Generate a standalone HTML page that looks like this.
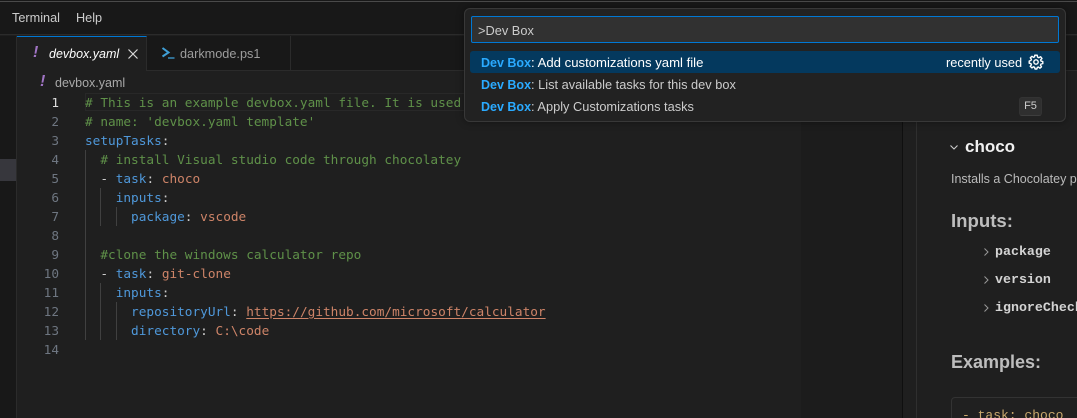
<!DOCTYPE html>
<html><head><meta charset="utf-8"><style>
*{box-sizing:border-box}
html,body{margin:0;padding:0;background:#1f1f1f}
#r{position:relative;width:1077px;height:418px;overflow:hidden;background:#1f1f1f;font-family:"Liberation Sans",sans-serif;font-size:12.5px;color:#ccc}
.a{position:absolute;white-space:pre}
.c{position:absolute;left:85px;height:19px;margin-top:1px;font:12.75px/19px "DejaVu Sans Mono",monospace;white-space:pre;color:#9cdcfe}
.n{position:absolute;left:17px;width:42px;margin-top:1px;text-align:right;font:12.75px/19px "DejaVu Sans Mono",monospace;color:#6e7681}
.g{color:#5f9149}.k{color:#4f98da}.s{color:#ce8468}.w{color:#ccc}
.ig{position:absolute;width:1px;background:#404040}
.b{color:#2aaaff;font-weight:bold;font-size:12.5px}
.row{position:absolute;left:481px;line-height:22px;height:22px;font-size:12.8px;color:#ccc;white-space:pre}
</style></head><body><div id="r">
<div class="a" style="left:0;top:0;width:1077px;height:35px;background:#181818;border-bottom:1px solid #2b2b2b"></div>
<div class="a" style="left:0;top:1px;width:1077px;height:1px;background:#4a4a4a"></div>
<div class="a" style="left:12px;top:9px;line-height:18px;font-size:12.7px;color:#ccc">Terminal</div>
<div class="a" style="left:76px;top:9px;line-height:18px;font-size:12.7px;color:#ccc">Help</div>
<div class="a" style="left:0;top:36px;width:17px;height:382px;background:#181818;border-right:1px solid #2b2b2b"></div>
<div class="a" style="left:0;top:159px;width:16px;height:22px;background:#37373d"></div>
<div class="a" style="left:17px;top:36px;width:1060px;height:35px;background:#181818;border-bottom:1px solid #2b2b2b"></div>
<div class="a" style="left:17px;top:36px;width:130px;height:35px;background:#1f1f1f;border-top:1px solid #0078d4;border-right:1px solid #2b2b2b"></div>
<div class="a" style="left:147px;top:36px;width:144px;height:35px;border-right:1px solid #2b2b2b"></div>
<div class="a" style="left:33px;top:44px;font:italic bold 16px/18px 'Liberation Sans',sans-serif;color:#a074c4">!</div>
<div class="a" style="left:49px;top:45px;line-height:18px;font-size:12.5px;font-style:italic;color:#fff">devbox.yaml</div>
<svg class="a" style="left:126px;top:47px" width="14" height="14" viewBox="0 0 14 14"><path d="M2.5 2.5L11.5 11.5M11.5 2.5L2.5 11.5" stroke="#d8d8d8" stroke-width="1.2" fill="none"/></svg>
<svg class="a" style="left:161px;top:46px" width="14" height="14" viewBox="0 0 14 14"><path d="M1.5 2L7.5 6.5L1.5 10.5" stroke="#3f9fd6" stroke-width="2" fill="none"/><path d="M7 12H13.5" stroke="#3f9fd6" stroke-width="1.3"/></svg>
<div class="a" style="left:180px;top:45px;line-height:18px;font-size:12.7px;color:#9d9d9d">darkmode.ps1</div>
<div class="a" style="left:40px;top:73px;font:italic bold 16px/18px 'Liberation Sans',sans-serif;color:#a074c4">!</div>
<div class="a" style="left:55px;top:74px;line-height:18px;font-size:12.5px;color:#a9a9a9">devbox.yaml</div>

<div class="a" style="left:85px;top:93px;width:700px;height:18px;border:1px solid #282828;border-right:0"></div>
<div class="ig" style="left:85px;top:150px;height:190px"></div>
<div class="ig" style="left:100px;top:188px;height:38px"></div>
<div class="ig" style="left:116px;top:207px;height:19px"></div>
<div class="ig" style="left:100px;top:283px;height:57px"></div>
<div class="ig" style="left:116px;top:302px;height:38px"></div>

<div class="n" style="top:93px;color:#ddd">1</div><div class="n" style="top:112px">2</div><div class="n" style="top:131px">3</div><div class="n" style="top:150px">4</div><div class="n" style="top:169px">5</div><div class="n" style="top:188px">6</div><div class="n" style="top:207px">7</div><div class="n" style="top:226px">8</div><div class="n" style="top:245px">9</div><div class="n" style="top:264px">10</div><div class="n" style="top:283px">11</div><div class="n" style="top:302px">12</div><div class="n" style="top:321px">13</div><div class="n" style="top:340px">14</div>

<div class="c g" style="top:93px"># This is an example devbox.yaml file. It is used</div>
<div class="c g" style="top:112px"># name: 'devbox.yaml template'</div>
<div class="c k" style="top:131px">setupTasks<span class="w">:</span></div>
<div class="c g" style="top:150px">  # install Visual studio code through chocolatey</div>
<div class="c k" style="top:169px">  <span class="w">-</span> task<span class="w">:</span> <span class="s">choco</span></div>
<div class="c k" style="top:188px">    inputs<span class="w">:</span></div>
<div class="c k" style="top:207px">      package<span class="w">:</span> <span class="s">vscode</span></div>
<div class="c g" style="top:245px">  #clone the windows calculator repo</div>
<div class="c k" style="top:264px">  <span class="w">-</span> task<span class="w">:</span> <span class="s">git-clone</span></div>
<div class="c k" style="top:283px">    inputs<span class="w">:</span></div>
<div class="c k" style="top:302px">      repositoryUrl<span class="w">:</span> <span class="s" style="text-decoration:underline;text-underline-offset:2px">https://github.com/microsoft/calculator</span></div>
<div class="c k" style="top:321px">      directory<span class="w">:</span> <span class="s">C:\code</span></div>

<div class="a" style="left:800px;top:71px;width:22px;height:347px;background:linear-gradient(90deg,#1f1f1f,#1b1b1b)"></div>
<div class="a" style="left:801px;top:71px;width:101px;height:347px;background:#1c1c1c"></div>
<div class="a" style="left:902px;top:71px;width:1px;height:347px;background:#0f0f0f"></div>
<div class="a" style="left:916px;top:71px;width:1px;height:347px;background:#2f2f2f"></div>
<svg class="a" style="left:949px;top:142px" width="10" height="10" viewBox="0 0 10 10"><path d="M1.5 3.5L5 7L8.5 3.5" stroke="#ccc" stroke-width="1.1" fill="none"/></svg>
<div class="a" style="left:965px;top:136px;line-height:22px;font-size:17px;font-weight:bold;color:#f0f0f0">choco</div>
<div class="a" style="left:951px;top:170px;line-height:18px;font-size:12.5px;color:#bbb">Installs a Chocolatey p</div>
<div class="a" style="left:951px;top:209px;line-height:24px;font-size:18.6px;font-weight:bold;color:#bdbdbd">Inputs:</div>
<svg class="a" style="left:982px;top:247px" width="8" height="10" viewBox="0 0 8 10"><path d="M2.5 1.5L6 5L2.5 8.5" stroke="#999" fill="none"/></svg>
<svg class="a" style="left:982px;top:275px" width="8" height="10" viewBox="0 0 8 10"><path d="M2.5 1.5L6 5L2.5 8.5" stroke="#999" fill="none"/></svg>
<svg class="a" style="left:982px;top:303px" width="8" height="10" viewBox="0 0 8 10"><path d="M2.5 1.5L6 5L2.5 8.5" stroke="#999" fill="none"/></svg>
<div class="a" style="left:995px;top:244px;font:bold 13.3px/16px 'Liberation Mono',monospace;color:#d4d4d4">package</div>
<div class="a" style="left:995px;top:272px;font:bold 13.3px/16px 'Liberation Mono',monospace;color:#d4d4d4">version</div>
<div class="a" style="left:995px;top:300px;font:bold 13.3px/16px 'Liberation Mono',monospace;color:#d4d4d4">ignoreCheck</div>
<div class="a" style="left:951px;top:350px;line-height:24px;font-size:18px;font-weight:bold;color:#bdbdbd">Examples:</div>
<div class="a" style="left:951px;top:397px;width:140px;height:30px;background:#202020;border:1px solid #333;border-radius:4px"></div>
<div class="a" style="left:962px;top:408px;font:13px/16px 'Liberation Mono',monospace;color:#c9a86c">- task: choco</div>

<div class="a" style="left:464px;top:8px;width:602px;height:114px;background:#222222;border:1px solid #383838;border-radius:6px;box-shadow:0 0 8px rgba(0,0,0,.4)"></div>
<div class="a" style="left:471px;top:16px;width:588px;height:27px;background:#313131;border:1px solid #0078d4;border-radius:2px"></div>
<div class="a" style="left:478px;top:22px;line-height:18px;font-size:12.8px;color:#ccc">&gt;Dev Box</div>
<div class="a" style="left:470px;top:51px;width:590px;height:22px;background:#04395e;border-radius:3px"></div>
<div class="row" style="top:52px;color:#fff;font-size:13.15px"><span class="b">Dev Box</span>: Add customizations yaml file</div>
<div class="row" style="top:74px"><span class="b">Dev Box</span>: List available tasks for this dev box</div>
<div class="row" style="top:96px"><span class="b">Dev Box</span>: Apply Customizations tasks</div>
<div class="a" style="left:946px;top:52px;line-height:22px;font-size:12.8px;color:#fff">recently used</div>
<svg class="a" style="left:1028px;top:54px" width="16" height="16" viewBox="0 0 16 16"><circle cx="8" cy="8" r="2.2" fill="none" stroke="#fff" stroke-width="1.4"/><path d="M6.8 1.2H9.2L9.6 3.1L10.9 3.7L12.6 2.7L14 4.5L12.6 5.9L13 7.1L14.8 7.6V9.6L13 10L12.5 11.2L13.5 12.8L11.9 14.2L10.4 13L9.3 13.4L8.9 15H7L6.6 13.3L5.4 12.8L3.9 13.9L2.2 12.3L3.4 10.8L2.9 9.6L1.2 9.2V7L2.9 6.5L3.4 5.3L2.3 3.8L4 2.3L5.5 3.3L6.5 2.9Z" fill="none" stroke="#fff" stroke-width="1.4" stroke-linejoin="round"/></svg>
<div class="a" style="left:1019px;top:97px;width:23px;height:19px;background:#2f2f2f;border:1px solid #333;border-bottom-color:#3e3e3e;border-radius:3px;text-align:center;line-height:17px;font-size:11px;color:#ccc">F5</div>
</div></body></html>
